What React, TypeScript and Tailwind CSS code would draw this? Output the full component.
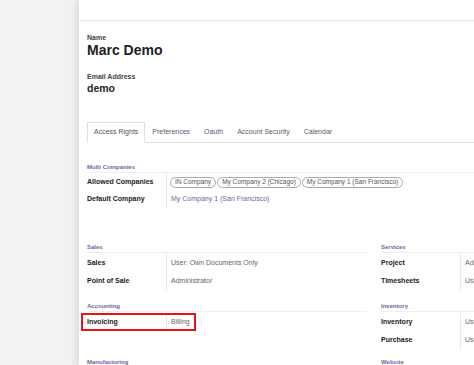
import React from "react";

const font = { fontFamily: '"Liberation Sans", Arial, sans-serif' };

function Row({
  label,
  children,
  highlight,
  short,
}: {
  label: string;
  children: React.ReactNode;
  highlight?: boolean;
  short?: boolean;
}) {
  return (
    <div className={`relative flex items-center ${short ? "h-[17px]" : "h-[18px]"}`}>
      <div className="w-[79px] shrink-0 text-[7px] font-bold text-[#222]">{label}</div>
      <div className="flex h-full flex-1 items-center overflow-hidden whitespace-nowrap border-l border-[#e8e8e8] pl-[4px] text-[7px] text-[#666]">
        {children}
      </div>
      {highlight && (
        <div className="pointer-events-none absolute left-[-6px] top-0 h-[18px] w-[115px] border-2 border-[#e3141c]" />
      )}
    </div>
  );
}

function Header({ title }: { title: string }) {
  return (
    <div className="mb-[1px] border-b border-[#efefef] pb-[1px] text-[6px] font-bold leading-[8px] text-[#7264a0]">
      {title}
    </div>
  );
}

function Pill({ children }: { children: React.ReactNode }) {
  return (
    <span className="inline-flex h-[11px] items-center rounded-full border border-[#a9a9a9] px-[4px] text-[6.5px] leading-none text-[#555]">
      {children}
    </span>
  );
}

export default function App() {
  return (
    <div className="flex h-[365px] w-[474px] overflow-hidden bg-white" style={font}>
      <div className="w-[79px] shrink-0 bg-[#f2f2f2]" />
      <div className="relative flex min-w-0 flex-1 flex-col bg-white shadow-[-3px_0_7px_rgba(0,0,0,0.10)]">
        <div className="h-[21px] shrink-0 border-b border-[#e6e6e6]" />
        <div className="pl-[8px]">
          <div className="mt-[13px] text-[7px] font-bold leading-[8px] text-[#444]">Name</div>
          <div className="text-[14px] font-bold leading-[16px] text-[#222]">Marc Demo</div>
          <div className="mt-[15px] text-[7px] font-bold leading-[8px] text-[#444]">Email Address</div>
          <div className="mt-[1px] text-[10.5px] font-bold leading-[12px] text-[#222]">demo</div>

          <div className="mt-[28px] flex h-[21px] items-stretch border-b border-[#e0e0e0] text-[7px] text-[#5b5870]">
            <div className="-mb-px flex items-center border border-b-white border-[#e0e0e0] bg-white px-[6px] text-[#555]">
              Access Rights
            </div>
            <div className="flex items-center border border-transparent px-[6px]">Preferences</div>
            <div className="flex items-center border border-transparent px-[6px]">Oauth</div>
            <div className="flex items-center border border-transparent px-[6px]">Account Security</div>
            <div className="flex items-center border border-transparent px-[6px]">Calendar</div>
          </div>

          <div className="mt-[20px]">
            <Header title="Multi Companies" />
            <Row label="Allowed Companies" short>
              <div className="-ml-[1px] flex gap-[1px]">
                <Pill>IN Company</Pill>
                <Pill>My Company 2 (Chicago)</Pill>
                <Pill>My Company 1 (San Francisco)</Pill>
              </div>
            </Row>
            <Row label="Default Company" short>
              <span className="text-[#7264a0]">My Company 1 (San Francisco)</span>
            </Row>
          </div>

          <div className="mt-[35px] grid grid-cols-[280px_1fr] gap-x-[14px] gap-y-[12px]">
            <div>
              <Header title="Sales" />
              <Row label="Sales">User: Own Documents Only</Row>
              <Row label="Point of Sale">Administrator</Row>
            </div>
            <div>
              <Header title="Services" />
              <Row label="Project">Administrator</Row>
              <Row label="Timesheets">User: all timesheets</Row>
            </div>
            <div>
              <Header title="Accounting" />
              <Row label="Invoicing" highlight>
                Billing
              </Row>
            </div>
            <div>
              <Header title="Inventory" />
              <Row label="Inventory">User</Row>
              <Row label="Purchase">User</Row>
            </div>
            <div className="-mt-[3px]">
              <Header title="Manufacturing" />
            </div>
            <div className="-mt-[3px]">
              <Header title="Website" />
            </div>
          </div>
        </div>
      </div>
    </div>
  );
}
